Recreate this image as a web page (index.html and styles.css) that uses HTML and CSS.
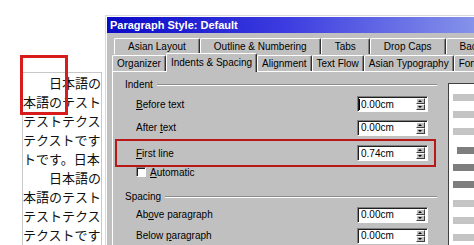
FILE: index.html
```html
<!DOCTYPE html>
<html lang="ja">
<head>
  <meta charset="UTF-8" />
  <meta name="viewport" content="width=device-width, initial-scale=1" />
  <title>Paragraph Style: Default</title>
  <link rel="stylesheet" href="styles.css">
</head>
<body>

  <div class="doc">
    <div class="marker"></div>
    <div class="frame">
      <div class="line indent">日本語の</div>
      <div class="line">本語のテスト</div>
      <div class="line">テストテクス</div>
      <div class="line">テクストです</div>
      <div class="line">トです。日本</div>
      <div class="line indent">日本語の</div>
      <div class="line">本語のテスト</div>
      <div class="line">テストテクス</div>
      <div class="line">テクストです</div>
    </div>
  </div>

  <div class="dialog">
    <div class="titlebar">Paragraph Style: Default</div>

    <div class="tabs tabs-back">
      <div class="tab">Asian Layout</div>
      <div class="tab">Outline &amp; Numbering</div>
      <div class="tab">Tabs</div>
      <div class="tab">Drop Caps</div>
      <div class="tab">Background</div>
    </div>
    <div class="tabs tabs-front">
      <div class="tab">Organizer</div>
      <div class="tab active">Indents &amp; Spacing</div>
      <div class="tab">Alignment</div>
      <div class="tab">Text Flow</div>
      <div class="tab">Asian Typography</div>
      <div class="tab">Font Effects</div>
    </div>

    <div class="panel">
      <div class="form">
        <div class="group-head"><span>Indent</span><i class="rule"></i></div>
        <div class="row">
          <span><u>B</u>efore text</span>
          <span class="field"><span class="value"><i class="caret"></i>0.00cm</span><span class="spin"><b class="up"></b><b class="down"></b></span></span>
        </div>
        <div class="row row-short">
          <span>After <u>t</u>ext</span>
          <span class="field"><span class="value">0.00cm</span><span class="spin"><b class="up"></b><b class="down"></b></span></span>
        </div>
        <div class="highlight">
          <div class="row">
            <span><u>F</u>irst line</span>
            <span class="field"><span class="value">0.74cm</span><span class="spin"><b class="up"></b><b class="down"></b></span></span>
          </div>
        </div>
        <div class="check-row"><i class="check"></i><span><u>A</u>utomatic</span></div>

        <div class="group-head spaced"><span>Spacing</span><i class="rule"></i></div>
        <div class="row row-tight">
          <span>Ab<u>o</u>ve paragraph</span>
          <span class="field"><span class="value">0.00cm</span><span class="spin"><b class="up"></b><b class="down"></b></span></span>
        </div>
        <div class="row row-tight">
          <span>Below <u>p</u>aragraph</span>
          <span class="field"><span class="value">0.00cm</span><span class="spin"><b class="up"></b><b class="down"></b></span></span>
        </div>
      </div>

      <div class="preview">
        <div class="bar"></div>
        <div class="bar"></div>
        <div class="bar"></div>
        <div class="bar dark first group"></div>
        <div class="bar dark"></div>
        <div class="bar dark"></div>
        <div class="bar group"></div>
        <div class="bar"></div>
        <div class="bar"></div>
      </div>
    </div>
  </div>

</body>
</html>
```

FILE: styles.css
```css
* {
  box-sizing: border-box;
}
body {
  margin: 0;
  width: 474px;
  height: 245px;
  overflow: hidden;
  display: flex;
  background: #fff;
  color: #000;
  font-family: 'Liberation Sans', Arial, sans-serif;
  font-size: 10px;
}

/* document on the left */
.doc {
  position: relative;
  flex: none;
  width: 105px;
  display: flex;
  flex-direction: column;
}
.marker {
  position: absolute;
  left: 20px;
  top: 55px;
  width: 48px;
  height: 60px;
  border: 3px solid #d81c1c;
  z-index: 2;
}
.frame {
  flex: 1;
  width: 80px;
  margin: 72px 0 0 22px;
  border-top: 1px solid #c8c8c8;
  border-left: 1px solid #c8c8c8;
  border-right: 1px solid #c8c8c8;
  font-family: 'Noto Sans CJK JP', sans-serif;
  font-size: 13px;
  line-height: 19px;
  white-space: nowrap;
  color: #111;
}
.indent {
  padding-left: 26px;
}

/* dialog */
.dialog {
  flex: none;
  width: 470px;
  margin-top: 15px;
  padding: 1px 0 0 1px;
  background: #c0c0c0;
  border-top: 1px solid #d8d8d8;
  border-left: 1px solid #d8d8d8;
  box-shadow: inset 1px 1px 0 #fff;
}
.titlebar {
  height: 16px;
  padding-left: 3px;
  line-height: 16px;
  font-size: 11px;
  font-weight: bold;
  color: #fff;
  background: linear-gradient(to right, #0a0ac8 0%, #3c3ce0 38%, #8896ea 80%, #a6c0f0 100%);
}

.tabs {
  display: flex;
  white-space: nowrap;
}
.tabs-back {
  height: 16px;
  margin: 5px 0 0 7px;
}
.tabs-front {
  height: 17px;
  margin-left: 5px;
  align-items: flex-end;
}
.tab {
  flex: none;
  height: 16px;
  padding: 2px 13px 0;
  line-height: 12px;
  border-top: 1px solid #fff;
  border-left: 1px solid #fff;
  border-right: 1px solid #303030;
  border-radius: 2px 2px 0 0;
  box-shadow: inset -1px 0 0 #808080;
}
.tabs-front .tab {
  padding: 2px 4px 0;
}
.tabs-front .tab.active {
  position: relative;
  height: 19px;
  margin-bottom: -1px;
  padding-top: 3px;
  background: #c0c0c0;
  z-index: 1;
}

.panel {
  display: flex;
  height: 200px;
  margin-left: 5px;
  border-top: 1px solid #fff;
  border-left: 1px solid #fff;
}
.form {
  flex: none;
  width: 324px;
}
.group-head {
  display: flex;
  align-items: center;
  height: 15px;
  margin-top: 5px;
  padding-left: 12px;
}
.group-head.spaced {
  margin-top: 12px;
}
.rule {
  flex: 1;
  margin-left: 4px;
  border-top: 1px solid #8c8c8c;
  border-bottom: 1px solid #fff;
}
.row {
  display: flex;
  align-items: center;
  justify-content: space-between;
  height: 24px;
  padding: 0 9px 0 23px;
}
.row-short {
  height: 23px;
}
.row-tight {
  height: 21px;
}
.highlight {
  position: relative;
  width: 321px;
  margin-left: 2px;
  border: 2px solid #b81818;
  z-index: 1;
}
.highlight .row {
  padding: 0 6px 0 19px;
}
.check-row {
  display: flex;
  align-items: center;
  height: 10px;
  padding-left: 23px;
}
.check {
  width: 10px;
  height: 10px;
  margin-right: 4px;
  background: #fff;
  border-top: 1px solid #808080;
  border-left: 1px solid #808080;
  border-right: 1px solid #fff;
  border-bottom: 1px solid #fff;
  box-shadow: inset 1px 1px 0 #202020;
}

.field {
  display: flex;
  align-items: center;
  width: 71px;
  height: 16px;
  padding: 0 1px 0 3px;
  background: #fff;
  border-top: 1px solid #808080;
  border-left: 1px solid #808080;
  border-right: 1px solid #fff;
  border-bottom: 1px solid #fff;
  box-shadow: inset 1px 1px 0 #202020;
}
.value {
  flex: 1;
  display: flex;
  align-items: center;
}
.caret {
  width: 1px;
  height: 11px;
  margin-left: -2px;
  margin-right: 1px;
  background: #000;
}
.spin {
  display: flex;
  flex-direction: column;
  width: 9px;
  margin-right: 1px;
}
.spin b {
  position: relative;
  height: 6px;
  background: #c0c0c0;
  border-top: 1px solid #fff;
  border-left: 1px solid #fff;
  border-right: 1px solid #404040;
  border-bottom: 1px solid #404040;
}
.spin b::after {
  content: '';
  position: absolute;
  left: 1px;
  top: 1px;
  border-left: 2px solid transparent;
  border-right: 2px solid transparent;
}
.spin .up::after {
  border-bottom: 2px solid #000;
}
.spin .down::after {
  border-top: 2px solid #000;
}

.preview {
  flex: none;
  width: 60px;
  margin: 11px 0 0 11px;
  padding-left: 4px;
  background: #fff;
  border-top: 1px solid #404040;
  border-left: 1px solid #404040;
}
.bar {
  height: 7px;
  margin-top: 10px;
  background: #c4c4c4;
}
.bar.group {
  margin-top: 12px;
}
.bar.dark {
  background: #7e7e7e;
}
.bar.first {
  margin-left: 4px;
}
```
